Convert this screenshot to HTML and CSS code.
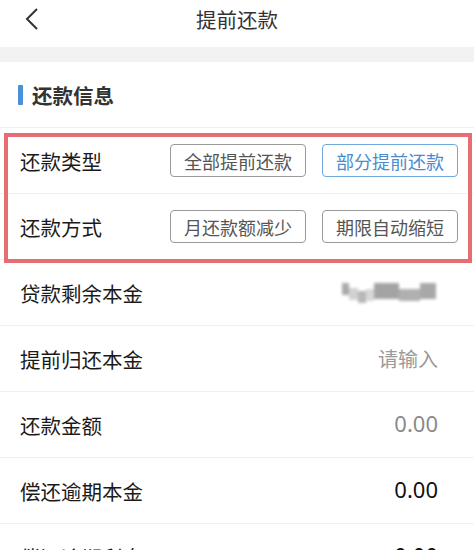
FILE: index.html
```html
<!DOCTYPE html>
<html lang="zh">
<head>
<meta charset="utf-8">
<link rel="stylesheet" href="styles.css">
</head>
<body>
<div class="page">
  <header class="topbar">
    <svg class="back" width="14" height="22" viewBox="0 0 14 22"><polyline points="12,1 2,11 12,21" fill="none" stroke="#333" stroke-width="2"/></svg>
    <div class="title">提前还款</div>
  </header>
  <div class="band"></div>
  <div class="section-head">
    <span class="bar"></span><span class="section-title">还款信息</span>
  </div>
  <div class="highlight">
    <div class="row">
      <span class="label">还款类型</span>
      <div class="opts">
        <span class="opt">全部提前还款</span>
        <span class="opt active">部分提前还款</span>
      </div>
    </div>
    <div class="row">
      <span class="label">还款方式</span>
      <div class="opts">
        <span class="opt">月还款额减少</span>
        <span class="opt">期限自动缩短</span>
      </div>
    </div>
  </div>
  <div class="row">
    <span class="label">贷款剩余本金</span>
    <span class="masked">
      <i class="b1"></i><i class="b2"></i><i class="b3"></i><i class="b4"></i><i class="b5"></i><i class="b6"></i><i class="b7"></i>
    </span>
  </div>
  <div class="row">
    <span class="label">提前归还本金</span>
    <span class="value placeholder">请输入</span>
  </div>
  <div class="row">
    <span class="label">还款金额</span>
    <span class="value num muted">0.00</span>
  </div>
  <div class="row">
    <span class="label">偿还逾期本金</span>
    <span class="value num">0.00</span>
  </div>
  <div class="row">
    <span class="label">偿还逾期利息</span>
    <span class="value num">0.00</span>
  </div>
</div>
</body>
</html>
```
FILE: styles.css
```css
html, body {
  margin: 0;
  padding: 0;
  background: #fff;
}
body {
  font-family: "Noto Sans CJK SC", "Noto Sans", sans-serif;
  color: #222;
  overflow: hidden;
}
.page {
  width: 474px;
  height: 550px;
  overflow: hidden;
}
.topbar {
  height: 47px;
  position: relative;
  display: flex;
  align-items: center;
  justify-content: center;
}
.back {
  position: absolute;
  left: 25px;
  top: 8px;
}
.title {
  font-size: 20.5px;
  color: #333;
  margin-top: -10px;
}
.band {
  height: 15px;
  background: #f2f2f2;
}
.section-head {
  height: 65px;
  display: flex;
  align-items: center;
  padding-left: 18px;
  border-bottom: 1px solid #f0f0f0;
}
.bar {
  width: 5px;
  height: 20px;
  background: #4a90d9;
  border-radius: 1px;
  margin-right: 9px;
}
.section-title {
  font-size: 20.5px;
  font-weight: bold;
  color: #333;
}
.highlight {
  position: relative;
}
.highlight::after {
  content: "";
  position: absolute;
  left: 4px;
  right: 2px;
  top: 5px;
  bottom: -3px;
  border: 4px solid #e66d74;
  pointer-events: none;
}
.row {
  height: 65px;
  border-bottom: 1px solid #f0f0f0;
  display: flex;
  align-items: center;
  justify-content: space-between;
  padding: 0 36px 0 20px;
}
.highlight .row {
  padding-right: 16px;
}
.label {
  font-size: 20.5px;
  color: #1a1a1a;
}
.opts {
  display: flex;
  gap: 16px;
}
.opt {
  width: 134px;
  height: 31px;
  border: 1px solid #9a9a9a;
  border-radius: 4px;
  display: flex;
  align-items: center;
  justify-content: center;
  font-size: 18px;
  color: #555;
}
.opt.active {
  border-color: #6ea8dc;
  color: #4a8ccd;
}
.value {
  font-size: 20px;
}
.placeholder {
  color: #9a9a9a;
}
.num {
  font-family: "Noto Sans", sans-serif;
  font-size: 22px;
  color: #111;
  margin-top: -3px;
}
.num.muted {
  color: #8a8a8a;
}
.masked {
  display: flex;
  align-items: flex-start;
  height: 22px;
  margin-top: 2px;
  margin-right: 2px;
  filter: blur(1.5px);
}
.masked i {
  display: block;
  height: 12px;
}
.b1 { width: 7px; background: #aaa; }
.b2 { width: 9px; background: #d2d2d2; margin-top: 5px; }
.b3 { width: 8px; background: #b8b8b8; margin-top: 8px; }
.b4 { width: 8px; background: #d8d8d8; margin-top: 6px; }
.b5 { width: 25px; background: #a4a4a4; height: 16px !important; }
.b6 { width: 21px; background: #b0b0b0; margin-top: 6px; }
.b7 { width: 16px; background: #a8a8a8; height: 16px !important; }
```
